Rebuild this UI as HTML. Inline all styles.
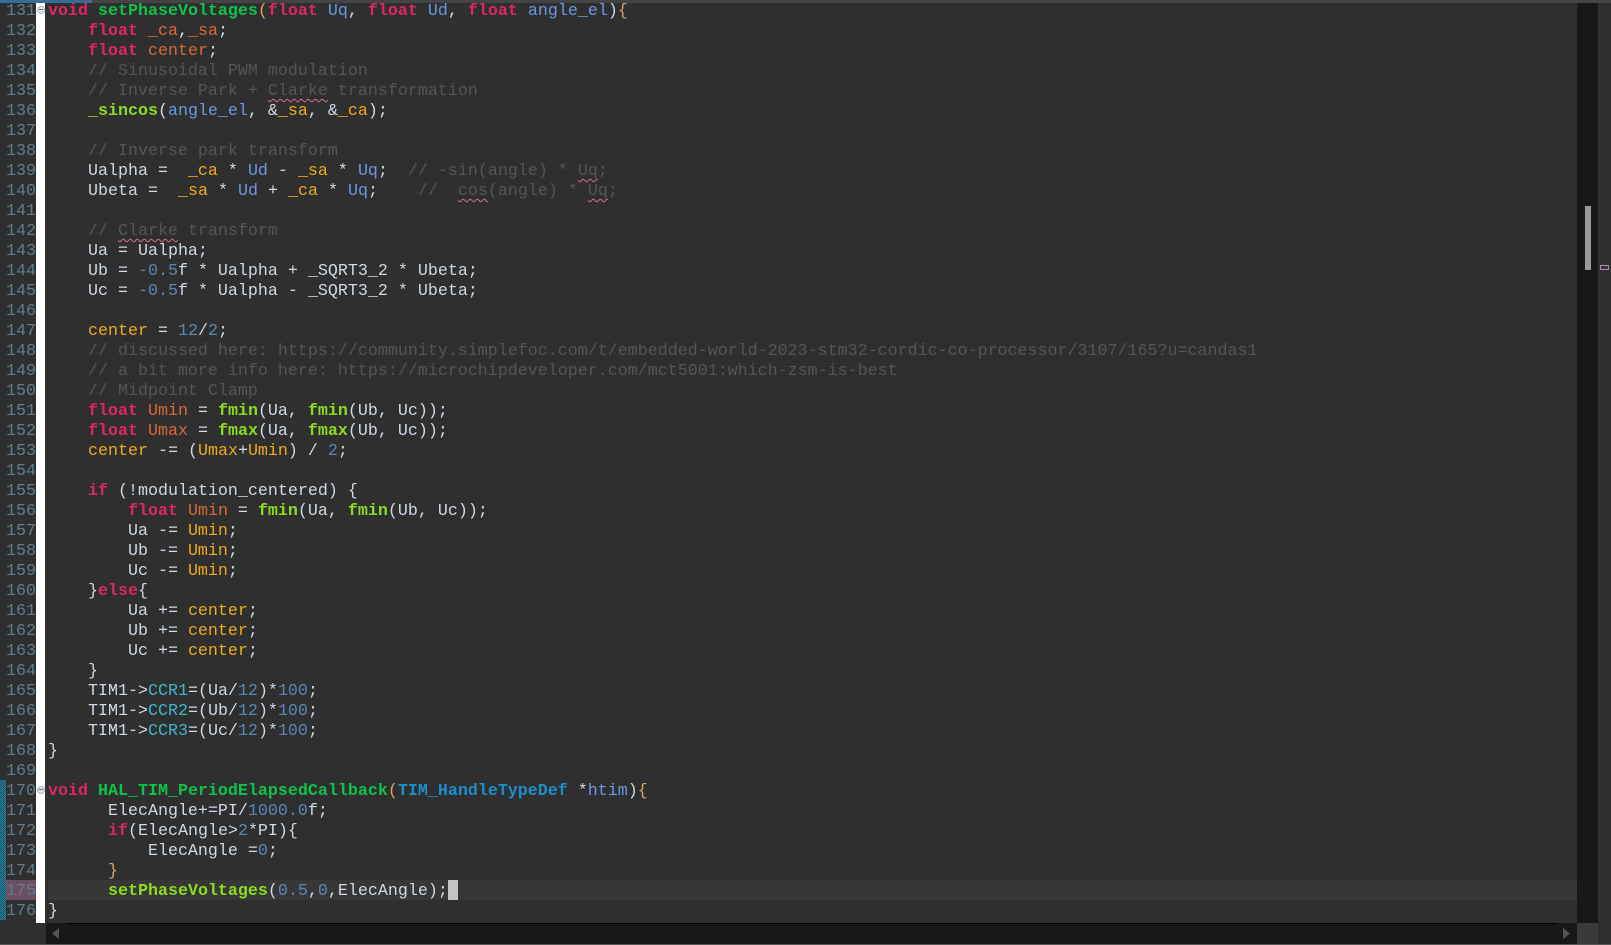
<!DOCTYPE html>
<html lang="en"><head><meta charset="utf-8"><title>Editor</title>
<style>
html,body{margin:0;padding:0;width:1611px;height:945px;overflow:hidden;background:#2f2f2f}
#a{position:relative;width:1611px;height:945px;overflow:hidden;background:#2f2f2f;font:16.67px/20px "Liberation Mono",monospace;color:#ced9e6}
.r{position:absolute}
.l,.n{position:absolute;white-space:pre;height:20px;line-height:20px;margin-top:2px}
.l{left:48px}
.n{left:6px;width:30px;text-align:right;color:#5f7d8f}
i{font-style:normal}
.k{color:#dd2760;font-weight:bold}.f{color:#0ec24a;font-weight:bold}.c{color:#8bdc1e;font-weight:bold}
.p{color:#6b98e2}.o{color:#d66a38}.g{color:#edab1d}.m{color:#555}.d{color:#5b86b4}
.t{color:#1a8fcb;font-weight:bold}.y{color:#3fb6cd}.b{color:#d8a56a}
.w{text-decoration:underline wavy #d9708a 1px;text-underline-offset:3px}
</style></head><body><div id="a">
<div class="r" style="left:0;top:0;width:1611px;height:3px;background:#444"></div>
<div class="r" style="left:0;top:0;width:92px;height:3px;background:#3a6d96"></div>
<div class="r" style="left:36px;top:3px;width:9px;height:920px;background:#fff"></div>
<div class="r" style="left:0;top:780px;width:6px;height:140px;background:repeating-conic-gradient(#1f86a3 0 25%,#24505f 0 50%) 0 0/2px 2px"></div>
<div class="r" style="left:6px;top:880px;width:30px;height:20px;background:#6d4f62"></div>
<div class="r" style="left:48px;top:880px;width:1529px;height:20px;background:#373737"></div>
<div class="r" style="left:448px;top:880px;width:10px;height:20px;background:#c4c4c4"></div>
<div class="r" style="left:37px;top:6px;width:6px;height:6px;border:1px solid #aab6c6;border-radius:50%;background:#dfe5ec"></div>
<div class="r" style="left:39px;top:9px;width:4px;height:1px;background:#667"></div>
<div class="r" style="left:37px;top:786px;width:6px;height:6px;border:1px solid #aab6c6;border-radius:50%;background:#dfe5ec"></div>
<div class="r" style="left:39px;top:789px;width:4px;height:1px;background:#667"></div>
<div class="r" style="left:1577px;top:3px;width:21px;height:920px;background:#181818"></div>
<div class="r" style="left:1585px;top:206px;width:6px;height:64px;background:#9a9a9a"></div>
<div class="r" style="left:1600px;top:265px;width:7px;height:3px;border:1px solid #b784b7;background:#333"></div>
<div class="r" style="left:46px;top:923px;width:1531px;height:21px;background:#181818"></div>
<div class="r" style="left:67px;top:923px;width:1489px;height:1px;background:#000"></div>
<div class="r" style="left:1577px;top:923px;width:21px;height:21px;background:#3a3a3a"></div>
<div class="r" style="left:0;top:944px;width:1611px;height:1px;background:#555"></div>
<svg class="r" style="left:50px;top:926px" width="12" height="16"><path d="M9 2L2 7.5L9 13Z" fill="#555"/></svg>
<svg class="r" style="left:1561px;top:926px" width="12" height="16"><path d="M2 2L9 7.5L2 13Z" fill="#555"/></svg>

<div class="n" style="top:0px">131</div><div class="l" style="top:0px"><i class="k">void</i> <i class="f">setPhaseVoltages</i><i class="b">(</i><i class="k">float</i> <i class="p">Uq</i>, <i class="k">float</i> <i class="p">Ud</i>, <i class="k">float</i> <i class="p">angle_el</i>)<i class="b">{</i></div>
<div class="n" style="top:20px">132</div><div class="l" style="top:20px">    <i class="k">float</i> <i class="o">_ca</i>,<i class="o">_sa</i>;</div>
<div class="n" style="top:40px">133</div><div class="l" style="top:40px">    <i class="k">float</i> <i class="o">center</i>;</div>
<div class="n" style="top:60px">134</div><div class="l m" style="top:60px">    // Sinusoidal PWM modulation</div>
<div class="n" style="top:80px">135</div><div class="l m" style="top:80px">    // Inverse Park + <i class="w">Clarke</i> transformation</div>
<div class="n" style="top:100px">136</div><div class="l" style="top:100px">    <i class="c">_sincos</i>(<i class="p">angle_el</i>, &amp;<i class="g">_sa</i>, &amp;<i class="g">_ca</i>);</div>
<div class="n" style="top:120px">137</div>
<div class="n" style="top:140px">138</div><div class="l m" style="top:140px">    // Inverse park transform</div>
<div class="n" style="top:160px">139</div><div class="l" style="top:160px">    Ualpha =  <i class="g">_ca</i> * <i class="p">Ud</i> - <i class="g">_sa</i> * <i class="p">Uq</i>;  <i class="m">// -sin(angle) * <i class="w">Uq</i>;</i></div>
<div class="n" style="top:180px">140</div><div class="l" style="top:180px">    Ubeta =  <i class="g">_sa</i> * <i class="p">Ud</i> + <i class="g">_ca</i> * <i class="p">Uq</i>;    <i class="m">//  <i class="w">cos</i>(angle) * <i class="w">Uq</i>;</i></div>
<div class="n" style="top:200px">141</div>
<div class="n" style="top:220px">142</div><div class="l m" style="top:220px">    // <i class="w">Clarke</i> transform</div>
<div class="n" style="top:240px">143</div><div class="l" style="top:240px">    Ua = Ualpha;</div>
<div class="n" style="top:260px">144</div><div class="l" style="top:260px">    Ub = <i class="d">-0.5</i>f * Ualpha + _SQRT3_2 * Ubeta;</div>
<div class="n" style="top:280px">145</div><div class="l" style="top:280px">    Uc = <i class="d">-0.5</i>f * Ualpha - _SQRT3_2 * Ubeta;</div>
<div class="n" style="top:300px">146</div>
<div class="n" style="top:320px">147</div><div class="l" style="top:320px">    <i class="g">center</i> = <i class="d">12</i>/<i class="d">2</i>;</div>
<div class="n" style="top:340px">148</div><div class="l m" style="top:340px">    // discussed here: https://community.simplefoc.com/t/embedded-world-2023-stm32-cordic-co-processor/3107/165?u=candas1</div>
<div class="n" style="top:360px">149</div><div class="l m" style="top:360px">    // a bit more info here: https://microchipdeveloper.com/mct5001:which-zsm-is-best</div>
<div class="n" style="top:380px">150</div><div class="l m" style="top:380px">    // Midpoint Clamp</div>
<div class="n" style="top:400px">151</div><div class="l" style="top:400px">    <i class="k">float</i> <i class="o">Umin</i> = <i class="c">fmin</i>(Ua, <i class="c">fmin</i>(Ub, Uc));</div>
<div class="n" style="top:420px">152</div><div class="l" style="top:420px">    <i class="k">float</i> <i class="o">Umax</i> = <i class="c">fmax</i>(Ua, <i class="c">fmax</i>(Ub, Uc));</div>
<div class="n" style="top:440px">153</div><div class="l" style="top:440px">    <i class="g">center</i> -= (<i class="g">Umax</i>+<i class="g">Umin</i>) / <i class="d">2</i>;</div>
<div class="n" style="top:460px">154</div>
<div class="n" style="top:480px">155</div><div class="l" style="top:480px">    <i class="k">if</i> (!modulation_centered) {</div>
<div class="n" style="top:500px">156</div><div class="l" style="top:500px">        <i class="k">float</i> <i class="o">Umin</i> = <i class="c">fmin</i>(Ua, <i class="c">fmin</i>(Ub, Uc));</div>
<div class="n" style="top:520px">157</div><div class="l" style="top:520px">        Ua -= <i class="g">Umin</i>;</div>
<div class="n" style="top:540px">158</div><div class="l" style="top:540px">        Ub -= <i class="g">Umin</i>;</div>
<div class="n" style="top:560px">159</div><div class="l" style="top:560px">        Uc -= <i class="g">Umin</i>;</div>
<div class="n" style="top:580px">160</div><div class="l" style="top:580px">    }<i class="k">else</i>{</div>
<div class="n" style="top:600px">161</div><div class="l" style="top:600px">        Ua += <i class="g">center</i>;</div>
<div class="n" style="top:620px">162</div><div class="l" style="top:620px">        Ub += <i class="g">center</i>;</div>
<div class="n" style="top:640px">163</div><div class="l" style="top:640px">        Uc += <i class="g">center</i>;</div>
<div class="n" style="top:660px">164</div><div class="l" style="top:660px">    }</div>
<div class="n" style="top:680px">165</div><div class="l" style="top:680px">    TIM1-&gt;<i class="y">CCR1</i>=(Ua/<i class="d">12</i>)*<i class="d">100</i>;</div>
<div class="n" style="top:700px">166</div><div class="l" style="top:700px">    TIM1-&gt;<i class="y">CCR2</i>=(Ub/<i class="d">12</i>)*<i class="d">100</i>;</div>
<div class="n" style="top:720px">167</div><div class="l" style="top:720px">    TIM1-&gt;<i class="y">CCR3</i>=(Uc/<i class="d">12</i>)*<i class="d">100</i>;</div>
<div class="n" style="top:740px">168</div><div class="l" style="top:740px">}</div>
<div class="n" style="top:760px">169</div>
<div class="n" style="top:780px">170</div><div class="l" style="top:780px"><i class="k">void</i> <i class="f">HAL_TIM_PeriodElapsedCallback</i><i class="b">(</i><i class="t">TIM_HandleTypeDef</i> *<i class="p">htim</i>)<i class="b">{</i></div>
<div class="n" style="top:800px">171</div><div class="l" style="top:800px">      ElecAngle+=PI/<i class="d">1000.0</i>f;</div>
<div class="n" style="top:820px">172</div><div class="l" style="top:820px">      <i class="k">if</i>(ElecAngle&gt;<i class="d">2</i>*PI){</div>
<div class="n" style="top:840px">173</div><div class="l" style="top:840px">          ElecAngle =<i class="d">0</i>;</div>
<div class="n" style="top:860px">174</div><div class="l" style="top:860px">      <i class="b">}</i></div>
<div class="n" style="top:880px">175</div><div class="l" style="top:880px">      <i class="c">setPhaseVoltages</i>(<i class="d">0.5</i>,<i class="d">0</i>,ElecAngle);</div>
<div class="n" style="top:900px">176</div><div class="l" style="top:900px">}</div>
</div></body></html>
